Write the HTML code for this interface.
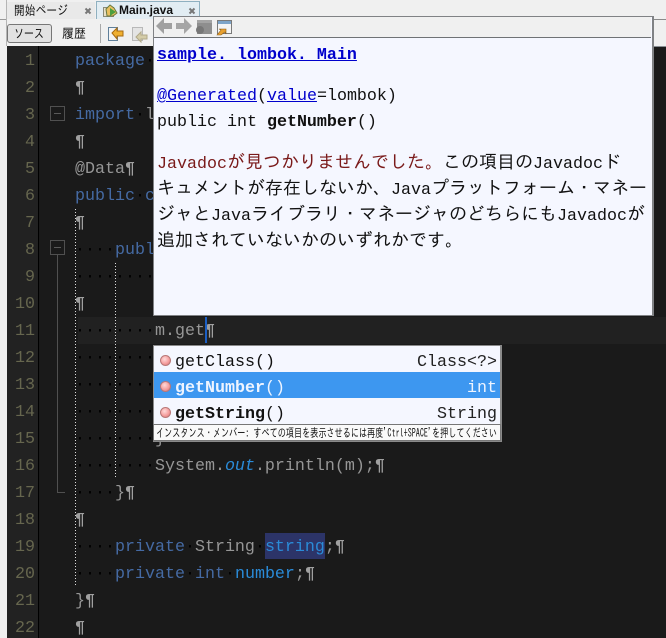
<!DOCTYPE html>
<html><head><meta charset="utf-8">
<style>
html,body{margin:0;padding:0;background:#f0f0f0}
#r{position:relative;width:666px;height:638px;overflow:hidden;background:#f0f0f0;font-family:"Liberation Sans","IPAGothic",sans-serif}
#r div{position:absolute}
.e{left:75px;height:27px;font:16.67px/27px "Liberation Mono",monospace;color:#969696;white-space:pre}
.n{left:7px;width:28px;text-align:right;height:27px;font:16.67px/27px "Liberation Mono",monospace;color:#66664e}
.k{color:#456aa3}.d{color:#000}.p{color:#a0a0a0;font-weight:bold}.f{color:#2a8bd8}
.t{left:157px;font:16.67px/26px "Liberation Mono","IPAGothic",monospace;color:#111;white-space:pre}
.t a{color:#0000cc;text-decoration:underline}
.j{font-family:"IPAGothic",sans-serif;font-size:18px}
.c{left:175px;font:16.67px/26px "Liberation Mono",monospace;color:#111;white-space:pre}
.o{right:169px;font:16.67px/26px "Liberation Mono",monospace;color:#222;white-space:pre;text-align:right}
.b{width:11px;height:11px;border-radius:50%;left:160px;background:radial-gradient(circle at 40% 35%,#ffdada,#f49a9a 60%,#c86a6a);border:1px solid #b87878;box-sizing:border-box}
.g{position:absolute;left:0;top:0}
</style></head><body>
<div id="r">
<!-- tabs -->
<div style="left:6px;top:0;width:1px;height:46px;background:#b5b5b5"></div>
<div style="left:0;top:19px;width:6px;height:1px;background:#9a9a9a"></div>
<div style="left:7px;top:2px;width:88px;height:17px;background:#e9e9e9"></div>
<div style="left:96px;top:1px;width:102px;height:17px;background:#e2edf3;border:1px solid #8fb0c0;border-bottom:0"></div>
<div style="left:7px;top:24px;width:43px;height:17px;background:#e2e2e2;border:1px solid #777;border-radius:3px"></div>
<svg class="g" width="200" height="46">
<text x="14" y="15" font-size="13" fill="#111" font-family="IPAGothic,sans-serif" textLength="54" lengthAdjust="spacingAndGlyphs">開始ページ</text>
<path d="M85.5 8.5l5 5M90.5 8.5l-5 5M189.5 8.5l5 5M194.5 8.5l-5 5" stroke="#777" stroke-width="2" fill="none"/>
<text x="14" y="38" font-size="13" fill="#111" font-family="IPAGothic,sans-serif" textLength="30" lengthAdjust="spacingAndGlyphs">ソース</text>
<text x="62" y="38" font-size="13" fill="#111" font-family="IPAGothic,sans-serif" textLength="24" lengthAdjust="spacingAndGlyphs">履歴</text>
<rect x="103.5" y="7.5" width="10" height="9" fill="#e8e0c8" stroke="#8a8a7a"/>
<path d="M106 9l4-4 4 3 3 5-4 3h-6z" fill="#e9c060" stroke="#6a7a40"/>
<path d="M110 8l6 4-6 4z" fill="#4aa040"/>
<rect x="100" y="24" width="1" height="19" fill="#a8a8a8"/>
<rect x="108.5" y="27.5" width="9" height="13" fill="#f4f4f4" stroke="#5f7f9a"/>
<path d="M112 33l5-5v3h6v5h-6v3z" fill="#f0b030" stroke="#a86a10"/>
<rect x="132.5" y="27.5" width="10" height="13" fill="#e4e4e4" stroke="#b8b8b8"/>
<path d="M136 37l5-5v3h6v4h-6v3z" fill="#d4cca8" stroke="#b0a888"/>
</svg>
<div style="left:119px;top:2px;font:bold 12px/17px 'Liberation Sans',sans-serif;color:#111">Main.java</div>
<!-- editor -->
<div style="left:7px;top:46px;width:659px;height:592px;background:#1a1a1a"></div>
<div style="left:653px;top:46px;width:13px;height:1px;background:#8a8f94"></div>
<div style="left:653px;top:19px;width:13px;height:1px;background:#8a8a8a"></div>
<div style="left:7px;top:46px;width:31px;height:592px;background:#222"></div>
<div style="left:38px;top:46px;width:1px;height:592px;background:#000"></div>
<div style="left:78px;top:317px;width:588px;height:27px;background:#212121"></div>
<!-- folds and guides -->
<svg class="g" width="130" height="638">
<rect x="50.5" y="106.5" width="14" height="14" fill="none" stroke="#505050"/>
<path d="M54 113.5h7" stroke="#5a5a5a"/>
<rect x="50.5" y="240.5" width="14" height="14" fill="none" stroke="#505050"/>
<path d="M54 247.5h7" stroke="#5a5a5a"/>
<path d="M57.5 255V492.5H65" fill="none" stroke="#505050"/>
<path d="M75.5 209V587" stroke="#ddd" stroke-dasharray="1 2"/>
<path d="M115.5 263V478" stroke="#ddd" stroke-dasharray="1 2"/>
</svg>
<!-- line numbers -->
<div class="n" style="top:48px">1</div><div class="n" style="top:75px">2</div><div class="n" style="top:102px">3</div><div class="n" style="top:129px">4</div><div class="n" style="top:156px">5</div><div class="n" style="top:183px">6</div><div class="n" style="top:210px">7</div><div class="n" style="top:237px">8</div><div class="n" style="top:264px">9</div><div class="n" style="top:291px">10</div><div class="n" style="top:318px">11</div><div class="n" style="top:345px">12</div><div class="n" style="top:372px">13</div><div class="n" style="top:399px">14</div><div class="n" style="top:426px">15</div><div class="n" style="top:453px">16</div><div class="n" style="top:480px">17</div><div class="n" style="top:507px">18</div><div class="n" style="top:534px">19</div><div class="n" style="top:561px">20</div><div class="n" style="top:588px">21</div><div class="n" style="top:615px">22</div>
<!-- code -->
<div class="e" style="top:48px"><span class="k">package</span><span class="d">·</span></div>
<div class="e" style="top:75px"><span class="p">¶</span></div>
<div class="e" style="top:102px"><span class="k">import</span><span class="d">·</span>l</div>
<div class="e" style="top:129px"><span class="p">¶</span></div>
<div class="e" style="top:156px">@Data<span class="p">¶</span></div>
<div class="e" style="top:183px"><span class="k">public</span><span class="d">·</span><span class="k">c</span></div>
<div class="e" style="top:210px"><span class="p">¶</span></div>
<div class="e" style="top:237px"><span class="d">····</span><span class="k">publ</span></div>
<div class="e" style="top:264px"><span class="d">········</span></div>
<div class="e" style="top:291px"><span class="p">¶</span></div>
<div class="e" style="top:318px"><span class="d">········</span>m.get<span class="p">¶</span></div>
<div style="left:205px;top:317px;width:2px;height:26px;background:#1c5fc4"></div>
<div class="e" style="top:345px"><span class="d">········</span></div>
<div class="e" style="top:372px"><span class="d">········</span></div>
<div class="e" style="top:399px"><span class="d">········</span></div>
<div class="e" style="top:426px"><span class="d">········</span>}</div>
<div class="e" style="top:453px"><span class="d">········</span>System.<span class="f" style="font-style:italic">out</span>.println(m);<span class="p">¶</span></div>
<div class="e" style="top:480px"><span class="d">····</span>}<span class="p">¶</span></div>
<div class="e" style="top:507px"><span class="p">¶</span></div>
<div style="left:265px;top:533px;width:60px;height:26px;background:#2c3468"></div>
<div class="e" style="top:534px"><span class="d">····</span><span class="k">private</span><span class="d">·</span>String<span class="d">·</span><span class="f">string</span>;<span class="p">¶</span></div>
<div class="e" style="top:561px"><span class="d">····</span><span class="k">private</span><span class="d">·</span><span class="k">int</span><span class="d">·</span><span class="f">number</span>;<span class="p">¶</span></div>
<div class="e" style="top:588px">}<span class="p">¶</span></div>
<div class="e" style="top:615px"><span class="p">¶</span></div>
<!-- javadoc popup -->
<div style="left:153px;top:16px;width:498px;height:298px;background:#f5f7ff;border:1px solid #808285;border-right-width:2px"></div>
<div style="left:154px;top:17px;width:497px;height:20px;background:#f0f0f0;border-bottom:1px solid #6f7275"></div>
<svg class="g" width="240" height="40">
<path d="M156 26l8-8v5h8v6h-8v5z" fill="#a0a0a0"/>
<path d="M192 26l-8-8v5h-8v6h8v5z" fill="#a6a6a6"/>
<rect x="197" y="20" width="15" height="14" fill="#8e8e8e"/>
<rect x="197" y="20" width="15" height="3" fill="#a4a4a4"/>
<circle cx="200" cy="30" r="4" fill="#777"/>
<rect x="217.5" y="20.5" width="14" height="13" fill="#f4f4f4" stroke="#7a7a7a"/>
<rect x="218" y="21" width="13" height="3" fill="#7da4c8"/>
<path d="M217 35l4-5-2-1h7v5l-1-2-4 3z" fill="#e8a030" stroke="#8a5a10" stroke-width=".6"/>
</svg>
<div class="t" style="top:43px"><a href="#" style="font-weight:bold">sample. lombok. Main</a></div>
<div class="t" style="top:84px"><a href="#">@Generated</a>(<a href="#">value</a>=lombok)</div>
<div class="t" style="top:110px">public int <b>getNumber</b>()</div>
<div class="t" style="top:149px"><span style="color:#7a1a1a">Javadoc<span class="j">が見つかりませんでした。</span></span><span class="j">この項目の</span>Javadoc<span class="j">ド</span></div>
<div class="t" style="top:175px"><span class="j">キュメントが存在しないか、</span>Java<span class="j">プラットフォーム・マネー</span></div>
<div class="t" style="top:201px"><span class="j">ジャと</span>Java<span class="j">ライブラリ・マネージャのどちらにも</span>Javadoc<span class="j">が</span></div>
<div class="t" style="top:227px"><span class="j">追加されていないかのいずれかです。</span></div>
<!-- completion popup -->
<div style="left:153px;top:345px;width:346px;height:95px;background:#f5f7ff;border:1px solid #8a8a8a;border-right-width:2px"></div>
<div style="left:154px;top:372px;width:346px;height:26px;background:#3d97f0"></div>
<div class="b" style="top:355px"></div><div class="b" style="top:381px"></div><div class="b" style="top:407px"></div>
<div class="c" style="top:350px">getClass()</div>
<div class="c" style="top:376px;color:#eef4ff"><b>getNumber</b>()</div>
<div class="c" style="top:402px"><b>getString</b>()</div>
<div class="o" style="top:350px">Class&lt;?&gt;</div>
<div class="o" style="top:376px;color:#eef4ff">int</div>
<div class="o" style="top:402px">String</div>
<div style="left:153px;top:424px;width:346px;height:15px;background:#fafafa;border:1px solid #777"></div>
<svg class="g" width="666" height="638">
<text x="156" y="437" font-size="12" fill="#111" font-family="IPAGothic,'Liberation Sans',sans-serif" textLength="341" lengthAdjust="spacingAndGlyphs">インスタンス・メンバー: すべての項目を表示させるには再度'Ctrl+SPACE'を押してください</text>
</svg>
</div>
</body></html>
